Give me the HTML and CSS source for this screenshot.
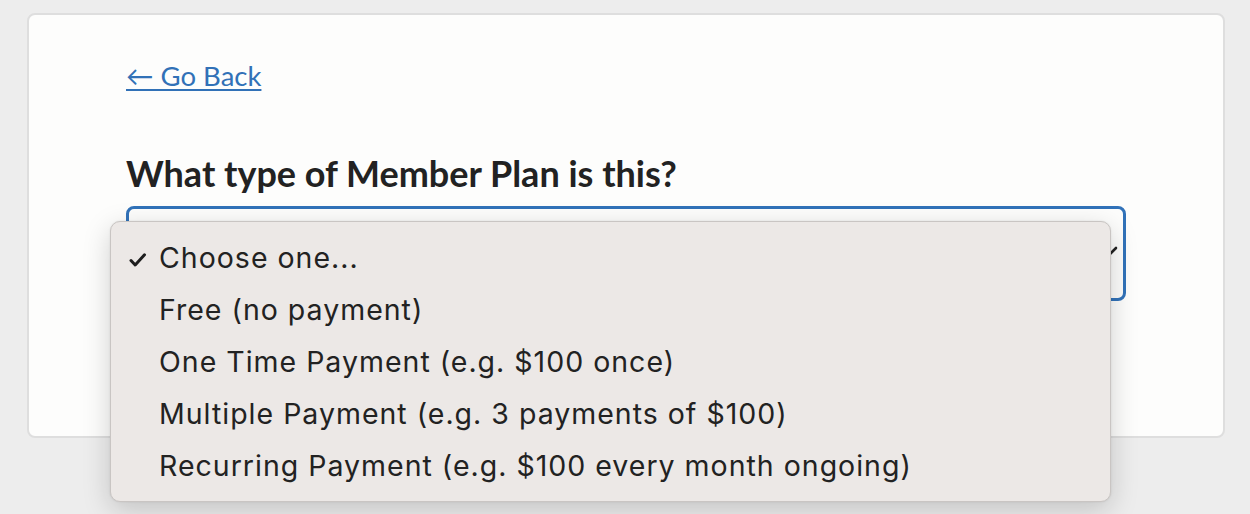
FILE: index.html
```html
<!DOCTYPE html>
<html>
<head>
<meta charset="utf-8">
<link rel="stylesheet" href="styles.css">
</head>
<body>
<div class="card">
  <a class="back" href="#">← Go Back</a>
  <h2 class="question">What type of Member Plan is this?</h2>
  <div class="select">
    <svg class="chev" width="16" height="10" viewBox="0 0 16 10"><path d="M2 2 L8 8 L14 2" fill="none" stroke="#222" stroke-width="2.6" stroke-linecap="round" stroke-linejoin="round"/></svg>
  </div>
</div>
<ul class="menu">
  <li class="item selected"><svg class="check" width="18" height="14" viewBox="0 0 18 14"><path d="M2 7.5 L6.2 12 L15.5 1.8" fill="none" stroke="#1e1e1e" stroke-width="3" stroke-linecap="round" stroke-linejoin="round"/></svg>Choose one...</li>
  <li class="item">Free (no payment)</li>
  <li class="item">One Time Payment (e.g. $100 once)</li>
  <li class="item">Multiple Payment (e.g. 3 payments of $100)</li>
  <li class="item">Recurring Payment (e.g. $100 every month ongoing)</li>
</ul>
</body>
</html>
```
FILE: styles.css
```css
html, body {
  margin: 0;
  padding: 0;
}
body {
  background: #ededed;
  width: 1250px;
  height: 514px;
  overflow: hidden;
  position: relative;
  font-family: Lato, "Liberation Sans", sans-serif;
}
.card {
  margin: 13px 0 0 27px;
  width: 1198px;
  height: 425px;
  box-sizing: border-box;
  border: 2px solid #dedede;
  border-radius: 8px;
  background: #fdfdfc;
  padding: 43px 0 0 97px;
}
.back {
  display: inline-block;
  color: #3171b7;
  font-size: 27.5px;
  line-height: 36px;
  text-decoration: underline;
  text-decoration-thickness: 2px;
  text-underline-offset: 3px;
}
.question {
  margin: 57px 0 0 0;
  font-size: 36px;
  line-height: 44px;
  font-weight: 700;
  color: #222;
}
.select {
  margin-top: 11px;
  width: 1000px;
  height: 95px;
  box-sizing: border-box;
  border: 3px solid #3172b9;
  border-radius: 8px;
  position: relative;
}
.chev {
  position: absolute;
  right: 5px;
  top: 37px;
}
.menu {
  position: absolute;
  left: 110px;
  top: 221px;
  width: 1001px;
  height: 281px;
  box-sizing: border-box;
  margin: 0;
  padding: 10px 0 0 0;
  list-style: none;
  background: #ece8e6;
  border: 1px solid #c9c5c3;
  border-radius: 10px;
  box-shadow: 0 8px 28px rgba(0,0,0,0.18), 0 0 2px rgba(0,0,0,0.1);
}
.item {
  height: 52px;
  line-height: 52px;
  padding-left: 48px;
  font-family: Inter, "Noto Sans", sans-serif;
  font-size: 28.5px;
  letter-spacing: 1px;
  color: #222;
  position: relative;
}
.check {
  position: absolute;
  left: 18px;
  top: 21px;
}
```
